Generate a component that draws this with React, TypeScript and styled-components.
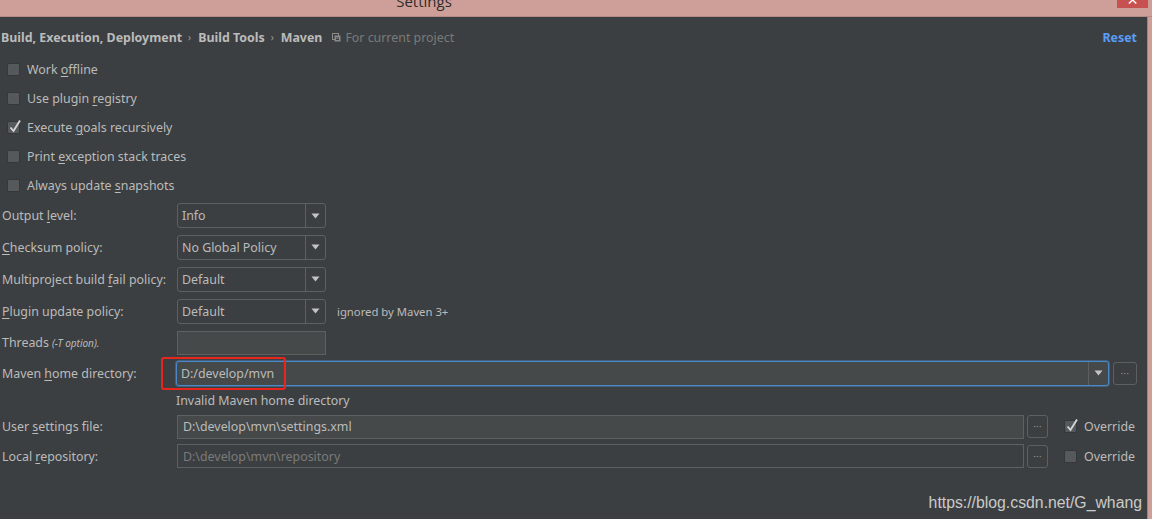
import React from 'react';
import styled, {createGlobalStyle} from 'styled-components';

const GlobalStyle = createGlobalStyle`
  html, body {
    margin: 0;
    padding: 0;
    background: #ce9f98;
  }
  body {
    font-family: "Noto Sans", "Open Sans", sans-serif;
    font-size: 12.4px;
    color: #bbbbbb;
  }
`;

const Window = styled.div`
  position: relative;
  display: flex;
  flex-direction: column;
  width: 1152px;
  height: 519px;
  overflow: hidden;
  background: #ce9f98;
`;

const TitleBar = styled.div`
  position: relative;
  display: flex;
  justify-content: center;
  height: 17px;
  border-bottom: 1px solid #b58a84;
  box-sizing: border-box;
  overflow: hidden;
`;

const TitleText = styled.span`
  margin-top: -9px;
  margin-left: -304px;
  font-family: "Open Sans", "Noto Sans", sans-serif;
  font-size: 15px;
  line-height: 20px;
  color: #2b2b2b;
`;

const CloseButton = styled.div`
  position: absolute;
  top: 0;
  right: 4px;
  width: 31px;
  height: 8px;
  background: #c75050;
  color: #fff;
  overflow: hidden;
  display: flex;
  justify-content: center;
  font-family: "DejaVu Sans", sans-serif;
  font-size: 14px;
  line-height: 0;
`;

const Frame = styled.div`
  flex: 1;
  display: flex;
  min-height: 0;
`;

const Content = styled.div`
  position: relative;
  flex: 1;
  display: flex;
  flex-direction: column;
  background: #3c3f41;
  padding: 8px 10px 0 0;
  border-right: 1px solid #a6807a;
`;

const RightEdge = styled.div`
  width: 4px;
  background: #ce9f98;
`;

const Header = styled.div`
  display: flex;
  align-items: center;
  height: 24px;
  padding-left: 1px;
`;

const Crumb = styled.span`
  font-weight: 700;
  color: #bbbbbb;
`;

const Sep = styled.span`
  margin: 0 7px 0 6px;
  font-size: 10px;
  color: #9a9a9a;
`;

const ProjectNote = styled.span`
  display: flex;
  align-items: center;
  gap: 4px;
  margin-left: 10px;
  color: #7a7a7a;
`;

const ResetLink = styled.span`
  margin-left: auto;
  font-weight: 700;
  color: #589df6;
`;

const Checks = styled.div`
  display: flex;
  flex-direction: column;
  margin-top: 6px;
  padding-left: 7px;
`;

const CheckRow = styled.label`
  display: flex;
  align-items: center;
  gap: 7px;
  height: 29px;
`;

const Box = styled.span`
  position: relative;
  width: 13px;
  height: 13px;
  box-sizing: border-box;
  border: 1px solid #35383a;
  border-radius: 2px;
  background: #55595b;
  flex-shrink: 0;

  svg {
    position: absolute;
    left: 0;
    top: -3px;
  }
`;

const Mn = styled.span`
  text-decoration: underline;
  text-underline-offset: 2px;
  text-decoration-thickness: 1px;
`;

const Row = styled.div<{$h: number}>`
  display: flex;
  align-items: center;
  height: ${p => p.$h}px;
`;

const Label = styled.span`
  width: 176px;
  padding-left: 2px;
  box-sizing: border-box;
  flex-shrink: 0;
  white-space: nowrap;
`;

const Small = styled.i`
  font-size: 10px;
  margin-left: 3px;
`;

const Combo = styled.div<{$focus?: boolean; $wide?: boolean}>`
  display: flex;
  align-items: stretch;
  height: 25px;
  box-sizing: border-box;
  border: 1px solid ${p => (p.$focus ? '#4a88c7' : '#5e6060')};
  box-shadow: ${p => (p.$focus ? '0 0 0 1px rgba(74,136,199,0.45)' : 'none')};
  border-radius: 3px;
  background: ${p => (p.$focus ? '#45494a' : '#3c3f41')};
  width: ${p => (p.$wide ? 'auto' : '149px')};
  flex: ${p => (p.$wide ? '1' : 'none')};
  margin-left: ${p => (p.$focus ? '0' : '1px')};
`;

const ComboValue = styled.span<{$pad?: number}>`
  flex: 1;
  display: flex;
  align-items: center;
  padding-left: ${p => p.$pad ?? 4}px;
  color: #bbbbbb;
`;

const ComboArrow = styled.span`
  width: 19px;
  border-left: 1px solid #5e6060;
  display: flex;
  align-items: center;
  justify-content: center;
`;

const Hint = styled.span`
  margin-left: 11px;
  font-size: 11.3px;
`;

const TextInput = styled.div<{$disabled?: boolean; $fixed?: number}>`
  display: flex;
  align-items: center;
  height: 24px;
  box-sizing: border-box;
  margin-left: 1px;
  padding-left: 5px;
  border: 1px solid #5e6060;
  background: ${p => (p.$disabled ? '#3c3f41' : '#45494a')};
  color: ${p => (p.$disabled ? '#7a7a7a' : '#bbbbbb')};
  width: ${p => (p.$fixed ? `${p.$fixed}px` : 'auto')};
  flex: ${p => (p.$fixed ? 'none' : '1')};
`;

const Dots = styled.span<{$w: number}>`
  display: flex;
  align-items: center;
  justify-content: center;
  width: ${p => p.$w}px;
  height: 23px;
  box-sizing: border-box;
  margin-left: ${p => (p.$w > 22 ? 4 : 3)}px;
  border: 1px solid #5e6060;
  border-radius: 3px;
  font-size: 9px;
  letter-spacing: 0.5px;
  color: #9a9a9a;
`;

const Override = styled.label`
  display: flex;
  align-items: center;
  gap: 7px;
  margin-left: 16px;
  margin-right: 2px;
`;

const ErrorText = styled.span`
  padding-left: 176px;
`;

const Annotation = styled.div`
  position: absolute;
  left: 161px;
  top: 340px;
  width: 125px;
  height: 33px;
  box-sizing: border-box;
  border: 2px solid #e8261e;
  border-radius: 3px;
  pointer-events: none;
`;

const Watermark = styled.div`
  position: absolute;
  right: 5px;
  bottom: 7px;
  font-family: "Liberation Sans", Arial, sans-serif;
  font-size: 15.8px;
  color: rgba(235, 235, 235, 0.82);
`;

const Check = () => (
  <svg width="14" height="15" viewBox="0 0 14 15">
    <path d="M2.5 8.5 L5.5 12 L12 1.5" fill="none" stroke="#d4d4d4" strokeWidth="1.9" strokeLinejoin="miter" />
  </svg>
);

const CheckBox = ({checked}: {checked?: boolean}) => <Box>{checked && <Check />}</Box>;

const Arrow = () => (
  <svg width="9" height="6" viewBox="0 0 9 6">
    <path d="M0.5 0.5 H8.5 L4.5 5.5 Z" fill="#c4c4c4" />
  </svg>
);

const CopyIcon = () => (
  <svg width="9" height="9" viewBox="0 0 9 9">
    <rect x="0.5" y="0.5" width="6" height="6" fill="none" stroke="#8a8a8a" />
    <rect x="2.5" y="2.5" width="6" height="6" fill="#8a8a8a" />
    <rect x="4" y="4.5" width="3" height="1" fill="#3c3f41" />
    <rect x="4" y="6" width="3" height="1" fill="#3c3f41" />
  </svg>
);

const SelectBox = ({value, focus, wide, pad}: {value: string; focus?: boolean; wide?: boolean; pad?: number}) => (
  <Combo $focus={focus} $wide={wide}>
    <ComboValue $pad={pad}>{value}</ComboValue>
    <ComboArrow><Arrow /></ComboArrow>
  </Combo>
);

const checks: {before: string; key: string; after: string; checked?: boolean}[] = [
  {before: 'Work ', key: 'o', after: 'ffline'},
  {before: 'Use plugin ', key: 'r', after: 'egistry'},
  {before: 'Execute ', key: 'g', after: 'oals recursively', checked: true},
  {before: 'Print ', key: 'e', after: 'xception stack traces'},
  {before: 'Always update ', key: 's', after: 'napshots'},
];

export default function App() {
  return (
    <Window>
      <GlobalStyle />
      <TitleBar>
        <TitleText>Settings</TitleText>
        <CloseButton>✕</CloseButton>
      </TitleBar>
      <Frame>
        <Content>
          <Header>
            <Crumb>Build, Execution, Deployment</Crumb>
            <Sep>›</Sep>
            <Crumb>Build Tools</Crumb>
            <Sep>›</Sep>
            <Crumb>Maven</Crumb>
            <ProjectNote><CopyIcon />For current project</ProjectNote>
            <ResetLink>Reset</ResetLink>
          </Header>

          <Checks>
            {checks.map(c => (
              <CheckRow key={c.after}>
                <CheckBox checked={c.checked} />
                <span>{c.before}<Mn>{c.key}</Mn>{c.after}</span>
              </CheckRow>
            ))}
          </Checks>

          <Row $h={31}>
            <Label>Output <Mn>l</Mn>evel:</Label>
            <SelectBox value="Info" />
          </Row>
          <Row $h={32}>
            <Label><Mn>C</Mn>hecksum policy:</Label>
            <SelectBox value="No Global Policy" />
          </Row>
          <Row $h={32}>
            <Label>Multiproject build <Mn>f</Mn>ail policy:</Label>
            <SelectBox value="Default" />
          </Row>
          <Row $h={32}>
            <Label><Mn>P</Mn>lugin update policy:</Label>
            <SelectBox value="Default" />
            <Hint>ignored by Maven 3+</Hint>
          </Row>
          <Row $h={31}>
            <Label>Threads<Small>(-T option).</Small></Label>
            <TextInput $fixed={149} />
          </Row>
          <Row $h={30}>
            <Label>Maven <Mn>h</Mn>ome directory:</Label>
            <SelectBox value="D:/develop/mvn" focus wide pad={4} />
            <Dots $w={24}>···</Dots>
          </Row>
          <Row $h={24}>
            <ErrorText>Invalid Maven home directory</ErrorText>
          </Row>
          <Row $h={29}>
            <Label>User <Mn>s</Mn>ettings file:</Label>
            <TextInput>D:\develop\mvn\settings.xml</TextInput>
            <Dots $w={21}>···</Dots>
            <Override><CheckBox checked />Override</Override>
          </Row>
          <Row $h={30}>
            <Label>Local <Mn>r</Mn>epository:</Label>
            <TextInput $disabled>D:\develop\mvn\repository</TextInput>
            <Dots $w={21}>···</Dots>
            <Override><CheckBox />Override</Override>
          </Row>

          <Annotation />
          <Watermark>https://blog.csdn.net/G_whang</Watermark>
        </Content>
        <RightEdge />
      </Frame>
    </Window>
  );
}
